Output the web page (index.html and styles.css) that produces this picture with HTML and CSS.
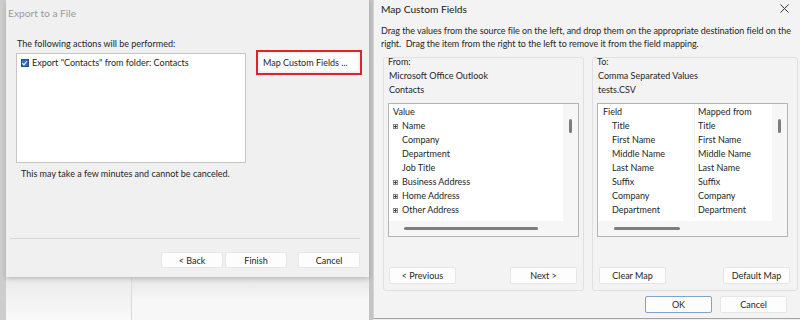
FILE: index.html
```html
<!DOCTYPE html>
<html lang="en">
<head>
  <meta charset="UTF-8">
  <meta name="viewport" content="width=device-width, initial-scale=1.0">
  <title>Export to a File - Map Custom Fields</title>
  <link rel="stylesheet" href="styles.css">
</head>
<body>
  <!-- the application behind the dialogs -->
  <div class="desktop">
    <div class="app-edge"></div>
    <div class="app-nav"></div>
    <div class="app-pane"></div>
    <div class="app-split"></div>
    <div class="app-rest"></div>
  </div>

  <div class="window export">
    <div class="titlebar">Export to a File</div>
    <div class="export-body">
      <div class="actions">
        <div class="caption">The following actions will be performed:</div>
        <div class="listbox">
          <div class="action"><span class="check"></span>Export "Contacts" from folder: Contacts</div>
        </div>
        <div class="note">This may take a few minutes and cannot be canceled.</div>
      </div>
      <div class="highlight">
        <button class="btn map">Map Custom Fields ...</button>
      </div>
    </div>
    <div class="footer">
      <button class="btn">&lt; Back</button>
      <button class="btn">Finish</button>
      <button class="btn cancel">Cancel</button>
    </div>
  </div>

  <div class="window mapper">
    <div class="titlebar">
      <span>Map Custom Fields</span>
      <svg class="close" width="9" height="9" viewBox="0 0 9 9">
        <path d="M0.5 0.5 L8.5 8.5 M8.5 0.5 L0.5 8.5" stroke="#333" stroke-width="1"/>
      </svg>
    </div>
    <div class="intro">
      <div>Drag the values from the source file on the left, and drop them on the appropriate destination field on the</div>
      <div>right.&nbsp; Drag the item from the right to the left to remove it from the field mapping.</div>
    </div>

    <div class="groups">
      <div class="group">
        <div class="group-label">From:</div>
        <div class="source">
          <div>Microsoft Office Outlook</div>
          <div>Contacts</div>
        </div>
        <div class="tree">
          <div class="tree-rows">
            <div class="row">Value</div>
            <div class="row"><span class="expander"></span>Name</div>
            <div class="row leaf">Company</div>
            <div class="row leaf">Department</div>
            <div class="row leaf">Job Title</div>
            <div class="row"><span class="expander"></span>Business Address</div>
            <div class="row"><span class="expander"></span>Home Address</div>
            <div class="row"><span class="expander"></span>Other Address</div>
          </div>
          <div class="vscroll"><span class="thumb"></span></div>
          <div class="hscroll"><span class="thumb" style="width: 134px"></span></div>
          <div class="corner"></div>
        </div>
        <div class="group-buttons">
          <button class="btn">&lt; Previous</button>
          <button class="btn">Next &gt;</button>
        </div>
      </div>

      <div class="group target">
        <div class="group-label">To:</div>
        <div class="source">
          <div>Comma Separated Values</div>
          <div>tests.CSV</div>
        </div>
        <div class="tree">
          <div class="tree-rows mapping">
            <div class="row"><span>Field</span><span>Mapped from</span></div>
            <div class="row"><span class="leaf">Title</span><span>Title</span></div>
            <div class="row"><span class="leaf">First Name</span><span>First Name</span></div>
            <div class="row"><span class="leaf">Middle Name</span><span>Middle Name</span></div>
            <div class="row"><span class="leaf">Last Name</span><span>Last Name</span></div>
            <div class="row"><span class="leaf">Suffix</span><span>Suffix</span></div>
            <div class="row"><span class="leaf">Company</span><span>Company</span></div>
            <div class="row"><span class="leaf">Department</span><span>Department</span></div>
          </div>
          <div class="vscroll"><span class="thumb"></span></div>
          <div class="hscroll"><span class="thumb" style="width: 66px"></span></div>
          <div class="corner"></div>
        </div>
        <div class="group-buttons">
          <button class="btn">Clear Map</button>
          <button class="btn">Default Map</button>
        </div>
      </div>
    </div>

    <div class="dialog-buttons">
      <button class="btn ok">OK</button>
      <button class="btn">Cancel</button>
    </div>
  </div>
</body>
</html>
```

FILE: styles.css
```css
* {
  box-sizing: border-box;
}
body {
  margin: 0;
  width: 800px;
  height: 320px;
  position: relative;
  overflow: hidden;
  background: #f4f4f4;
  font-family: Lato, "Noto Sans", sans-serif;
  font-size: 9px;
  color: #262626;
}
button {
  font: inherit;
  color: inherit;
}

/* background app */
.desktop {
  display: flex;
  height: 100%;
}
.app-edge {
  width: 6px;
  background: #cdcdcd;
}
.app-nav {
  width: 126px;
  border-right: 1px solid #dadada;
  background: linear-gradient(#e3e3e3 277px, #ececec 280px, #f9f9f9 320px);
}
.app-pane {
  width: 237px;
  background: linear-gradient(#e3e3e3 277px, #e8e8e8 280px, #f7f7f7 300px);
}
.app-split {
  width: 4px;
  background: #c4c4c4;
}
.app-rest {
  flex: 1;
  background: #f0f0f0;
}

/* windows */
.window {
  position: absolute;
  top: 0;
  display: flex;
  flex-direction: column;
}
.export {
  left: 6px;
  width: 363px;
  height: 277px;
  background: #f0f0f0;
  box-shadow: 0 2px 5px rgba(0, 0, 0, 0.18);
}
.mapper {
  left: 373px;
  width: 434px;
  height: 319px;
  background: #f3f3f3;
  border-left: 1px solid #d4d4d4;
  border-bottom: 1px solid #a2a2a2;
}

.btn {
  height: 16px;
  padding: 0;
  background: #fdfdfd;
  border: 1px solid #e6e6e6;
  border-radius: 2px;
  text-align: center;
}

/* Export to a File */
.export .titlebar {
  height: 26px;
  line-height: 26px;
  padding-left: 2px;
  font-size: 10.2px;
  color: #9a9a9a;
}
.export-body {
  flex: 1;
  display: flex;
  padding: 12px 0 0 10px;
}
.actions {
  width: 230px;
}
.caption {
  line-height: 12px;
  padding-left: 1px;
}
.listbox {
  height: 110px;
  margin-top: 3px;
  background: #fff;
  border: 1px solid #c6c6c6;
  padding: 3px 0 0 4px;
}
.action {
  display: flex;
  align-items: center;
  line-height: 12px;
}
.check {
  width: 8px;
  height: 8px;
  margin-right: 3px;
  background: #2f6fc4;
  border: 1px solid #1d4f96;
  position: relative;
}
.check::after {
  content: "";
  position: absolute;
  left: 1px;
  top: 0;
  width: 2px;
  height: 4px;
  border: solid #fff;
  border-width: 0 1px 1px 0;
  transform: rotate(40deg);
}
.note {
  margin-top: 5px;
  padding-left: 5px;
  line-height: 12px;
}
.highlight {
  margin: 12px 0 0 10px;
  width: 106px;
  height: 25px;
  border: 2px solid #e1222b;
  padding: 1px;
}
.map {
  width: 100%;
  height: 100%;
  text-align: left;
  padding-left: 3px;
  border-color: #f3f3f3;
}
.footer {
  margin: 0 9px 0 4px;
  border-top: 1px solid #d6d6d6;
  padding: 13px 0 9px;
  display: flex;
  justify-content: flex-end;
  gap: 2px;
}
.footer .btn {
  width: 62px;
}
.footer .cancel {
  margin-left: 9px;
}

/* Map Custom Fields */
.mapper .titlebar {
  height: 17px;
  display: flex;
  align-items: center;
  justify-content: space-between;
  padding: 0 18px 0 7px;
  font-size: 10.2px;
  color: #1a1a1a;
}
.intro {
  margin-top: 7px;
  padding-left: 7px;
  line-height: 13px;
  letter-spacing: -0.05px;
  white-space: nowrap;
}
.groups {
  margin-top: 7px;
  padding-left: 9px;
  display: grid;
  grid-template-columns: 201px 206px;
  gap: 8px;
}
.group {
  height: 234px;
  border: 1px solid #e0e0e0;
  border-radius: 3px;
  padding: 0 6px 0 4px;
}
.group-label {
  line-height: 9px;
  margin-top: -1px;
}
.source {
  margin-top: 3px;
  padding-left: 1px;
  line-height: 14px;
}
.tree {
  width: 191px;
  height: 134px;
  margin-top: 6px;
  border: 1px solid #b4b4b4;
  display: grid;
  grid-template-columns: 1fr 15px;
  grid-template-rows: 1fr 15px;
  background: #f6f6f6;
}
.tree-rows {
  background: #fff;
  padding: 1px 0 0 4px;
  overflow: hidden;
}
.row {
  height: 14px;
  line-height: 14px;
  display: flex;
  align-items: center;
  white-space: nowrap;
}
.leaf {
  padding-left: 9px;
}
.expander {
  width: 5px;
  height: 5px;
  margin-right: 4px;
  border: 1px solid #8a8a8a;
  background:
    linear-gradient(#444, #444) center / 3px 1px no-repeat,
    linear-gradient(#444, #444) center / 1px 3px no-repeat,
    #f4f4f4;
}
.mapping .row {
  display: grid;
  grid-template-columns: 91px 1fr;
}
.mapping .row span + span {
  padding-left: 3px;
  border-left: 1px solid #f0f0f0;
  height: 14px;
}
.vscroll {
  display: flex;
  justify-content: center;
  padding-top: 15px;
}
.vscroll .thumb {
  width: 3px;
  height: 14px;
  border-radius: 2px;
  background: #7d7d7d;
}
.hscroll {
  padding: 6px 0 0 15px;
}
.hscroll .thumb {
  display: block;
  height: 3px;
  border-radius: 2px;
  background: #7d7d7d;
}
.target .tree-rows {
  padding-left: 5px;
}
.target .hscroll {
  padding-left: 16px;
}
.group-buttons {
  margin-top: 30px;
  padding-left: 1px;
  display: flex;
  justify-content: space-between;
}
.group-buttons .btn,
.dialog-buttons .btn {
  width: 67px;
  height: 17px;
}
.target .group-buttons {
  padding-left: 2px;
  padding-right: 1px;
}
.dialog-buttons {
  margin-top: 5px;
  width: 415px;
  padding-right: 2px;
  display: flex;
  justify-content: flex-end;
  gap: 8px;
}
.dialog-buttons .ok {
  border-color: #7fa3cf;
}
```
